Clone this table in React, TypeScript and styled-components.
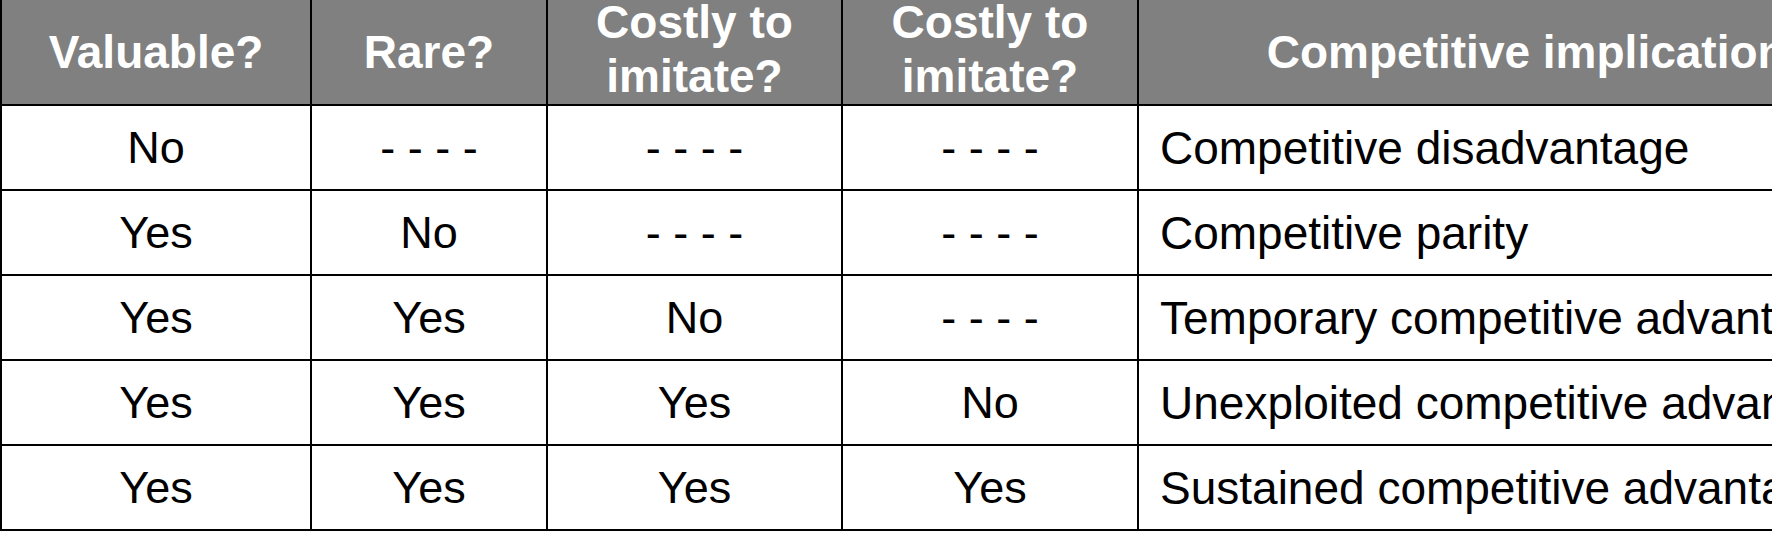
import styled, { createGlobalStyle } from 'styled-components';


const Global = createGlobalStyle`
    html, body {
        margin: 0;
        padding: 0;
        background: #fff;
        overflow: hidden;
    }
    body {
        font-family: "Liberation Sans", Arial, Helvetica, sans-serif;
    }
`

const Sheet = styled.div`
    display: grid;
    grid-template-columns: 308px 234px 293px 294px 800px;
    grid-template-rows: 104px repeat(5, 83px);
    gap: 2px;
    padding: 0 0 2px 2px;
    width: max-content;
    background: #000;
`

const HeadCell = styled.div<{ $lines?: number }>`
    display: flex;
    align-items: center;
    justify-content: center;
    text-align: center;
    background: #808080;
    color: #fff;
    font-weight: 700;
    font-size: 46px;
    line-height: ${p => (p.$lines === 2 ? '54px' : 'normal')};
    padding-bottom: ${p => (p.$lines === 2 ? '6px' : '0')};
    overflow: hidden;
`

const Cell = styled.div<{ $left?: boolean }>`
    display: flex;
    align-items: center;
    justify-content: ${p => (p.$left ? 'flex-start' : 'center')};
    padding-left: ${p => (p.$left ? '21px' : '0')};
    background: #fff;
    color: #000;
    font-size: ${p => (p.$left ? '46px' : '45px')};
    white-space: nowrap;
    overflow: hidden;
`

const DASH = '- - - -'

const rows = [
    ['No', DASH, DASH, DASH, 'Competitive disadvantage'],
    ['Yes', 'No', DASH, DASH, 'Competitive parity'],
    ['Yes', 'Yes', 'No', DASH, 'Temporary competitive advantage'],
    ['Yes', 'Yes', 'Yes', 'No', 'Unexploited competitive advantage'],
    ['Yes', 'Yes', 'Yes', 'Yes', 'Sustained competitive advantage'],
]

export default function App() {
    return (
        <>
            <Global />
            <Sheet>
                <HeadCell>Valuable?</HeadCell>
                <HeadCell>Rare?</HeadCell>
                <HeadCell $lines={2}>Costly to<br />imitate?</HeadCell>
                <HeadCell $lines={2}>Costly to<br />imitate?</HeadCell>
                <HeadCell>Competitive implications</HeadCell>
                {rows.map((row, r) =>
                    row.map((text, c) => (
                        <Cell key={`${r}-${c}`} $left={c === 4}>{text}</Cell>
                    ))
                )}
            </Sheet>
        </>
    )
}
